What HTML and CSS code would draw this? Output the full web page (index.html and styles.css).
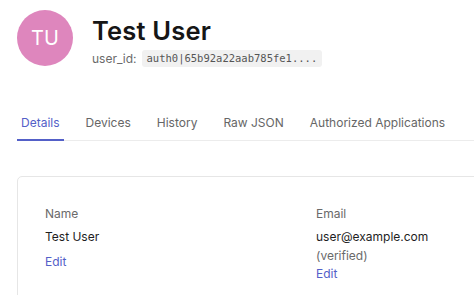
FILE: index.html
```html
<!DOCTYPE html>
<html>
<head>
<meta charset="utf-8">
<link rel="stylesheet" href="styles.css">
</head>
<body>
<div class="page">
  <header class="profile">
    <div class="avatar">TU</div>
    <div class="ident">
      <h1 class="name">Test User</h1>
      <div class="uid"><span class="uid-label">user_id:</span><code class="uid-code">auth0|65b92a22aab785fe1....</code></div>
    </div>
  </header>
  <nav class="tabs">
    <a class="tab active">Details</a>
    <a class="tab">Devices</a>
    <a class="tab">History</a>
    <a class="tab">Raw JSON</a>
    <a class="tab">Authorized Applications</a>
  </nav>
  <section class="card">
    <div class="field">
      <div class="label">Name</div>
      <div class="value">Test User</div>
      <a class="edit edit-name">Edit</a>
    </div>
    <div class="field">
      <div class="label">Email</div>
      <div class="value">user@example.com</div>
      <div class="note">(verified)</div>
      <a class="edit">Edit</a>
    </div>
  </section>
</div>
</body>
</html>
```
FILE: styles.css
```css
html, body {
  margin: 0;
  padding: 0;
  background: #fff;
  overflow: hidden;
}
body {
  font-family: Inter, "Noto Sans", sans-serif;
  color: #1e1e1e;
}
.page {
  width: 640px;
  padding-left: 17px;
}
.profile {
  display: flex;
  align-items: flex-start;
  gap: 19px;
  padding-top: 10px;
}
.avatar {
  width: 56px;
  height: 56px;
  border-radius: 50%;
  background: #de86bd;
  color: #fff;
  font-size: 20px;
  font-weight: 400;
  display: flex;
  align-items: center;
  justify-content: center;
  flex: none;
}
.ident {
  padding-top: 6px;
}
.name {
  margin: 0;
  font-size: 25.5px;
  font-weight: 600;
  line-height: 30px;
  color: #161616;
  letter-spacing: 0.2px;
}
.uid {
  display: flex;
  align-items: center;
  gap: 5px;
  margin-top: 4px;
}
.uid-label {
  font-size: 12px;
  color: #6a6a6a;
}
.uid-code {
  font-family: "DejaVu Sans Mono", monospace;
  font-size: 10.5px;
  color: #555;
  background: #f1f1f1;
  border-radius: 3px;
  padding: 2px 5px 3px;
  line-height: 12px;
}
.tabs {
  display: flex;
  gap: 18px;
  margin-top: 45px;
  border-bottom: 1px solid #ececec;
}
.tab {
  font-size: 12px;
  line-height: 15px;
  color: #666;
  padding: 3px 4px 9px;
  border-bottom: 2px solid transparent;
  margin-bottom: -1px;
}
.tab.active {
  color: #5360c8;
  border-bottom-color: #5360c8;
}
.card {
  margin-top: 35px;
  border: 1px solid #e6e6e6;
  border-radius: 5px;
  padding: 28px 27px 40px;
  display: grid;
  grid-template-columns: 271px 1fr;
}
.field {
  display: flex;
  flex-direction: column;
  align-items: flex-start;
  font-size: 12px;
}
.label {
  color: #6a6a6a;
  line-height: 18px;
}
.value {
  margin-top: 5px;
  line-height: 18px;
  color: #1e1e1e;
}
.note {
  color: #6a6a6a;
  line-height: 19px;
}
.edit {
  color: #5360c8;
  line-height: 18px;
}
.edit-name {
  margin-top: 7px;
}
```
